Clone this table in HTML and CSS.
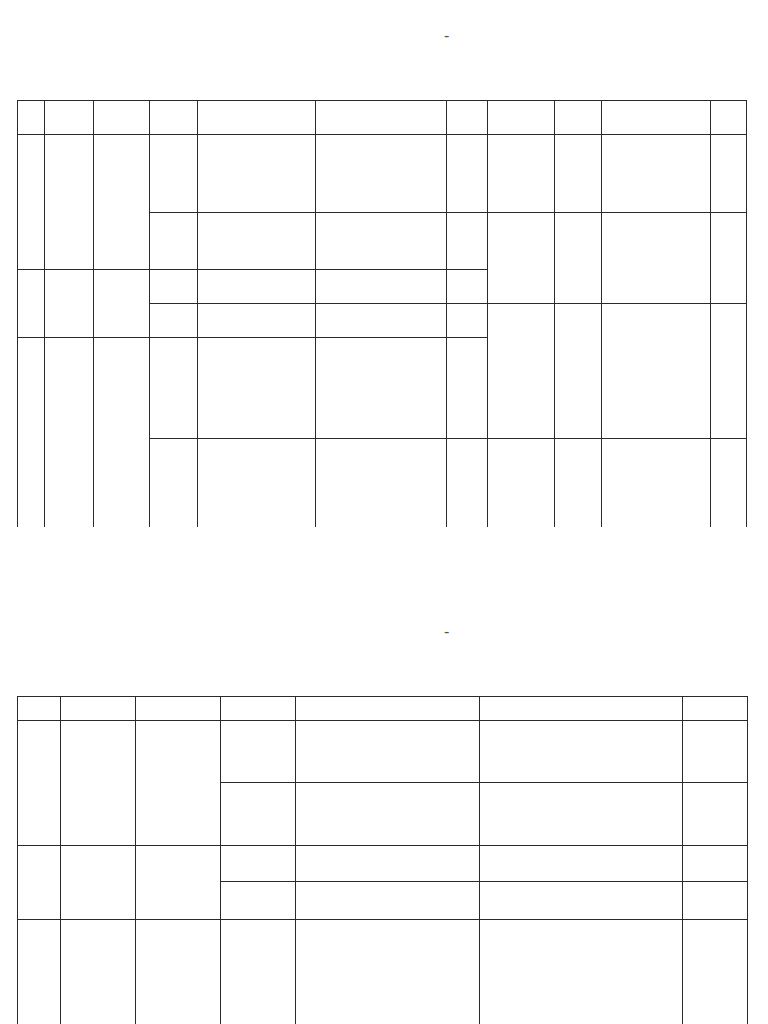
FILE: index.html
```html
<!DOCTYPE html>
<html lang="zh">
<head>
<meta charset="utf-8">
<title>表格</title>
<link rel="stylesheet" href="styles.css">
</head>
<body>
<section class="page">
  <div class="page-title">-</div>
  <table class="grid grid-a">
    <colgroup>
      <col class="w27"><col class="w49"><col class="w56"><col class="w48"><col class="w118"><col class="w131"><col class="w41"><col class="w67"><col class="w47"><col class="w109"><col class="w36">
    </colgroup>
    <tr class="h34"><td></td><td></td><td></td><td></td><td></td><td></td><td></td><td></td><td></td><td></td><td></td></tr>
    <tr class="h78"><td rowspan="2"></td><td rowspan="2"></td><td rowspan="2"></td><td></td><td></td><td></td><td></td><td></td><td></td><td></td><td></td></tr>
    <tr class="h57"><td></td><td></td><td></td><td></td><td rowspan="2"></td><td rowspan="2"></td><td rowspan="2"></td><td rowspan="2"></td></tr>
    <tr class="h34"><td rowspan="2"></td><td rowspan="2"></td><td rowspan="2"></td><td></td><td></td><td></td><td></td></tr>
    <tr class="h34"><td></td><td></td><td></td><td></td><td rowspan="2"></td><td rowspan="2"></td><td rowspan="2"></td><td rowspan="2"></td></tr>
    <tr class="h101"><td rowspan="2"></td><td rowspan="2"></td><td rowspan="2"></td><td></td><td></td><td></td><td></td></tr>
    <tr class="h200"><td></td><td></td><td></td><td></td><td></td><td></td><td></td><td></td></tr>
  </table>
</section>
<section class="page">
  <div class="page-title">-</div>
  <table class="grid grid-b">
    <colgroup>
      <col class="w43"><col class="w75"><col class="w85"><col class="w75"><col class="w184"><col class="w203"><col class="w65">
    </colgroup>
    <tr class="h24"><td></td><td></td><td></td><td></td><td></td><td></td><td></td></tr>
    <tr class="h62"><td rowspan="2"></td><td rowspan="2"></td><td rowspan="2"></td><td></td><td></td><td></td><td></td></tr>
    <tr class="h63"><td></td><td></td><td></td><td></td></tr>
    <tr class="h36"><td rowspan="2"></td><td rowspan="2"></td><td rowspan="2"></td><td></td><td></td><td></td><td></td></tr>
    <tr class="h38"><td></td><td></td><td></td><td></td></tr>
    <tr class="h200"><td></td><td></td><td></td><td></td><td></td><td></td><td></td></tr>
  </table>
</section>
</body>
</html>
```
FILE: styles.css
```css
html, body {
  margin: 0;
  padding: 0;
  background: #fff;
  font-family: "Liberation Sans", Arial, sans-serif;
}

.page {
  height: 527px;
  overflow: hidden;
  margin-bottom: 69px;
  padding-left: 17px;
}

.page-title {
  height: 100px;
  box-sizing: border-box;
  padding-top: 26px;
  padding-left: 427px;
  font-size: 16px;
  line-height: 20px;
  color: #555;
}

.grid {
  border-collapse: collapse;
  table-layout: fixed;
  width: 729px;
}

.grid td {
  border: 1px solid #2a2a2a;
  padding: 0;
}

.w27 { width: 27px; }
.w36 { width: 36px; }
.w41 { width: 41px; }
.w43 { width: 43px; }
.w47 { width: 47px; }
.w48 { width: 48px; }
.w49 { width: 49px; }
.w56 { width: 56px; }
.w65 { width: 65px; }
.w67 { width: 67px; }
.w75 { width: 75px; }
.w85 { width: 85px; }
.w109 { width: 109px; }
.w118 { width: 118px; }
.w131 { width: 131px; }
.w184 { width: 184px; }
.w203 { width: 203px; }

.h24 { height: 24px; }
.h34 { height: 34px; }
.h36 { height: 36px; }
.h38 { height: 38px; }
.h57 { height: 57px; }
.h62 { height: 62px; }
.h63 { height: 63px; }
.h78 { height: 78px; }
.h101 { height: 101px; }
.h200 { height: 200px; }
```
